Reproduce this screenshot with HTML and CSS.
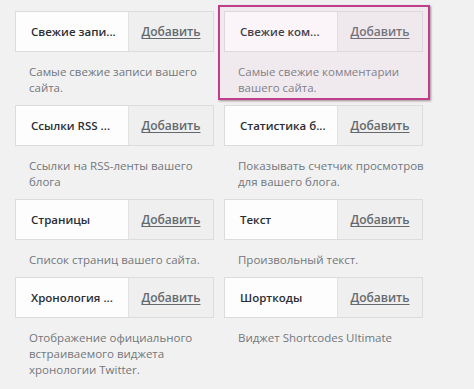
FILE: index.html
```html
<!DOCTYPE html>
<html lang="ru">
<head>
<meta charset="utf-8">
<link rel="stylesheet" href="styles.css">
</head>
<body>
<div class="widgets">
  <div class="widget">
    <div class="widget-top"><div class="title">Свежие запи...</div><div class="action"><a href="#">Добавить</a></div></div>
    <p class="desc">Самые свежие записи вашего<br>сайта.</p>
  </div>
  <div class="widget highlighted">
    <div class="widget-top"><div class="title">Свежие ком...</div><div class="action"><a href="#">Добавить</a></div></div>
    <p class="desc">Самые свежие комментарии<br>вашего сайта.</p>
  </div>
  <div class="widget">
    <div class="widget-top"><div class="title">Ссылки RSS ...</div><div class="action"><a href="#">Добавить</a></div></div>
    <p class="desc">Ссылки на RSS-ленты вашего<br>блога</p>
  </div>
  <div class="widget">
    <div class="widget-top"><div class="title">Статистика б...</div><div class="action"><a href="#">Добавить</a></div></div>
    <p class="desc">Показывать счетчик просмотров<br>для вашего блога.</p>
  </div>
  <div class="widget">
    <div class="widget-top"><div class="title">Страницы</div><div class="action"><a href="#">Добавить</a></div></div>
    <p class="desc">Список страниц вашего сайта.</p>
  </div>
  <div class="widget">
    <div class="widget-top"><div class="title">Текст</div><div class="action"><a href="#">Добавить</a></div></div>
    <p class="desc">Произвольный текст.</p>
  </div>
  <div class="widget">
    <div class="widget-top"><div class="title">Хронология ...</div><div class="action"><a href="#">Добавить</a></div></div>
    <p class="desc">Отображение официального<br>встраиваемого виджета<br>хронологии Twitter.</p>
  </div>
  <div class="widget">
    <div class="widget-top"><div class="title">Шорткоды</div><div class="action"><a href="#">Добавить</a></div></div>
    <p class="desc">Виджет Shortcodes Ultimate</p>
  </div>
</div>
</body>
</html>
```

FILE: styles.css
```css
html, body {
  margin: 0;
  padding: 0;
  background: #f1f1f1;
}

body {
  font-family: "Open Sans", "Noto Sans", sans-serif;
  color: #23282d;
  width: 474px;
  height: 389px;
  overflow: hidden;
}

.widgets {
  display: grid;
  grid-template-columns: 199px 199px;
  column-gap: 10px;
  row-gap: 9px;
  padding: 11px 0 0 15px;
  align-items: start;
}

.widget {
  position: relative;
}

.widget-top {
  display: flex;
  height: 39px;
  border: 1px solid #dcdcdc;
  background: #fdfdfd;
}

.title {
  flex: 1;
  display: flex;
  align-items: center;
  padding-left: 15px;
  font-size: 11.5px;
  font-weight: 600;
  color: #2a2e33;
  white-space: nowrap;
}

.action {
  width: 84px;
  display: flex;
  align-items: center;
  justify-content: center;
  background: #efefef;
  border-left: 1px solid #e2e2e2;
}

.action a {
  font-size: 12px;
  font-weight: 600;
  color: #64696e;
  text-decoration: underline;
  text-underline-offset: 2px;
}

.desc {
  margin: 0;
  padding: 12px 0 0 14px;
  font-size: 11.5px;
  line-height: 16px;
  color: #72777c;
  white-space: nowrap;
}

.highlighted::after {
  content: "";
  position: absolute;
  top: -6px;
  left: -6px;
  right: -7px;
  bottom: -4px;
  border: 2px solid #bf3f8d;
  background: rgba(235, 190, 220, 0.12);
  box-shadow: 1px 1px 2px rgba(60, 20, 40, 0.45);
  pointer-events: none;
}
```
